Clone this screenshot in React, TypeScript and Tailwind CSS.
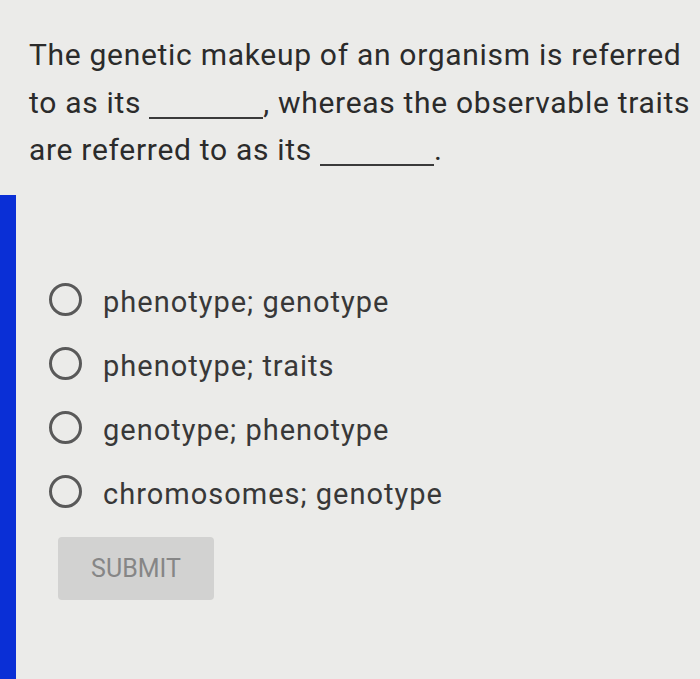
const options = [
  "phenotype; genotype",
  "phenotype; traits",
  "genotype; phenotype",
  "chromosomes; genotype",
];

const Blank = () => (
  <span className="inline-block w-[114px] h-[2px] bg-[#3a3a3a] align-[-6px] ml-[8px]"></span>
);

const App = () => {
  return (
    <div className="w-[700px] h-[679px] bg-[#ebebe9] font-['Roboto',sans-serif] overflow-hidden flex flex-col">
      {/* QUESTION */}
      <div className="pl-[29px] pt-[31px] h-[195px] text-[30px] tracking-[0.7px] leading-[47.5px] text-[#2b2b2b] whitespace-nowrap">
        <p>
          The genetic makeup of an organism is referred
          <br />
          to as its<Blank />, whereas the observable traits
          <br />
          are referred to as its<Blank />.
        </p>
      </div>
      {/* ANSWERS */}
      <div className="flex flex-row flex-1">
        <div className="w-[16px] bg-[#0a2fd6]"></div>
        <div className="flex flex-col pl-[33px] pt-[88px]">
          <div className="flex flex-col gap-[31px]">
            {options.map((o) => (
              <label key={o} className="flex flex-row items-center gap-[21px] h-[33px]">
                <span className="w-[33px] h-[33px] rounded-full border-[3px] border-[#595959]"></span>
                <span className="text-[29px] tracking-[1px] text-[#383838] leading-[33px] pt-[6px]">{o}</span>
              </label>
            ))}
          </div>
          <button className="mt-[29px] ml-[9px] w-[156px] h-[63px] rounded-[4px] bg-[#d2d2d1] text-[25px] text-[#868686] font-['Roboto',sans-serif]">
            SUBMIT
          </button>
        </div>
      </div>
    </div>
  );
};

export default App;
